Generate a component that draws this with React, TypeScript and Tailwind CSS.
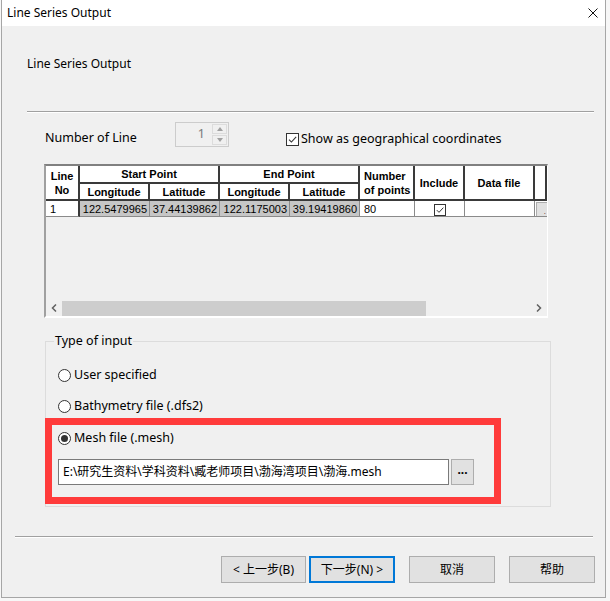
import React from 'react';

const ui = "font-['Noto_Sans','Noto_Sans_CJK_SC',sans-serif]";
const gridFont = "font-['Liberation_Sans',Arial,sans-serif]";

function Tick({ className }: { className?: string }) {
    return (
        <svg viewBox="0 0 12 12" className={className} fill="none">
            <polyline points="2.2,6.2 4.8,8.8 10,3.2" stroke="#333" strokeWidth="1.2" />
        </svg>
    );
}

function Radio({ checked, label }: { checked?: boolean; label: string }) {
    return (
        <div className="flex h-4 items-center">
            <span className="flex h-[13px] w-[13px] items-center justify-center rounded-full border border-[#333] bg-white">
                {checked && <span className="h-[7px] w-[7px] rounded-full bg-[#333]" />}
            </span>
            <span className="ml-[3px] text-[12.5px] leading-4">{label}</span>
        </div>
    );
}

const head = 'flex items-center justify-center border-b-2 border-r-2 border-[#3a3a3a] bg-white font-bold';
const cell = 'flex items-center border-b border-r border-[#8a8a8a]';

export default function App() {
    return (
        <div className={`h-[601px] w-[610px] overflow-hidden bg-[#f7f7f7] text-black ${ui}`}>
            <div className="ml-[1px] flex h-[598px] w-[605px] flex-col border-x border-b border-[#a6a6a6] bg-[#f0f0f0]">
                {/* title bar */}
                <div className="flex h-[26px] shrink-0 items-center justify-between bg-white pl-[5px] pr-[7px]">
                    <span className="text-[12px] leading-4">Line Series Output</span>
                    <svg viewBox="0 0 10 10" className="h-[10px] w-[10px]" fill="none">
                        <path d="M0.5 0.5 L9.5 9.5 M9.5 0.5 L0.5 9.5" stroke="#111" strokeWidth="1" />
                    </svg>
                </div>

                <p className="ml-[25px] mt-[30px] text-[12px] leading-4">Line Series Output</p>

                <div className="ml-[25px] mt-[39px] h-[2px] w-[567px] border-y border-b-white border-t-[#a0a0a0]" />

                {/* number of line */}
                <div className="ml-[43px] mt-[9px] flex h-[25px] items-start">
                    <span className="mt-[8px] w-[130px] text-[12.5px] leading-4">Number of Line</span>
                    <div className="flex h-[25px] w-[54px] border border-[#cccccc] bg-[#f0f0f0]">
                        <span className="flex-1 pr-[7px] pt-[3px] text-right text-[12.5px] leading-4 text-[#7a7a7a]">1</span>
                        <div className="my-[1px] mr-[1px] flex w-[15px] flex-col gap-[1px]">
                            <div className="flex flex-1 items-center justify-center border border-[#dcdcdc] bg-[#f0f0f0]">
                                <svg viewBox="0 0 6 4" className="h-[4px] w-[6px]">
                                    <path d="M0 4 L3 0 L6 4 Z" fill="#a0a0a0" />
                                </svg>
                            </div>
                            <div className="flex flex-1 items-center justify-center border border-[#dcdcdc] bg-[#f0f0f0]">
                                <svg viewBox="0 0 6 4" className="h-[4px] w-[6px]">
                                    <path d="M0 0 L3 4 L6 0 Z" fill="#a0a0a0" />
                                </svg>
                            </div>
                        </div>
                    </div>
                    <div className="ml-[57px] mt-[9px] flex items-center">
                        <span className="flex h-[13px] w-[13px] items-center justify-center border border-[#333] bg-white">
                            <Tick className="h-[11px] w-[11px]" />
                        </span>
                        <span className="ml-[2px] text-[12.5px] leading-4">Show as geographical coordinates</span>
                    </div>
                </div>

                {/* grid */}
                <div className={`ml-[42px] mt-[17px] flex h-[154px] w-[504px] flex-col border-b-2 border-l-2 border-r border-t-2 border-b-white border-l-[#a0a0a0] border-r-white border-t-[#808080] text-[11px] ${gridFont}`}>
                    <div className="grid grid-cols-[34px_70px_70px_70px_70px_55px_50px_70px_1fr] grid-rows-[18px_17px_16px] overflow-hidden leading-[14px]">
                        <div className={`${head} col-start-1 row-span-2 row-start-1 flex-col`}>
                            <span>Line</span>
                            <span>No</span>
                        </div>
                        <div className={`${head} col-span-2 col-start-2 row-start-1`}>Start Point</div>
                        <div className={`${head} col-span-2 col-start-4 row-start-1`}>End Point</div>
                        <div className={`${head} col-start-6 row-span-2 row-start-1 flex-col !items-start pl-[4px]`}>
                            <span>Number</span>
                            <span>of points</span>
                        </div>
                        <div className={`${head} col-start-7 row-span-2 row-start-1`}>Include</div>
                        <div className={`${head} col-start-8 row-span-2 row-start-1`}>Data file</div>
                        <div className={`${head} col-start-9 row-span-2 row-start-1 border-r-0`} />
                        <div className={`${head} col-start-2 row-start-2`}>Longitude</div>
                        <div className={`${head} col-start-3 row-start-2`}>Latitude</div>
                        <div className={`${head} col-start-4 row-start-2`}>Longitude</div>
                        <div className={`${head} col-start-5 row-start-2`}>Latitude</div>

                        <div className="col-start-1 row-start-3 flex items-center border-b border-r-2 border-b-[#8a8a8a] border-r-[#3a3a3a] bg-white pl-[4px]">
                            1
                        </div>
                        <div className={`${cell} col-start-2 row-start-3 justify-end bg-[#c6c6c6] pr-[2px]`}>122.5479965</div>
                        <div className={`${cell} col-start-3 row-start-3 justify-end bg-[#c6c6c6] pr-[2px]`}>37.44139862</div>
                        <div className={`${cell} col-start-4 row-start-3 justify-end bg-[#c6c6c6] pr-[2px]`}>122.1175003</div>
                        <div className={`${cell} col-start-5 row-start-3 justify-end bg-[#c6c6c6] pr-[2px]`}>39.19419860</div>
                        <div className={`${cell} col-start-6 row-start-3 bg-white pl-[4px]`}>80</div>
                        <div className={`${cell} col-start-7 row-start-3 items-end justify-center bg-white`}>
                            <span className="flex h-[12px] w-[12px] items-center justify-center border border-[#333] bg-white">
                                <Tick className="h-[10px] w-[10px]" />
                            </span>
                        </div>
                        <div className={`${cell} col-start-8 row-start-3 bg-white`} />
                        <div className="col-start-9 row-start-3 flex items-stretch border-b border-[#8a8a8a] bg-white pl-[1px] pt-[1px]">
                            <span className="flex flex-1 items-end justify-end overflow-hidden border-l border-t border-[#adadad] bg-[#e1e1e1] pr-[1px] text-[8px] leading-[8px] text-[#5a1010]">
                                .
                            </span>
                        </div>
                    </div>

                    <div className="flex-1" />

                    {/* horizontal scrollbar */}
                    <div className="flex h-[16px] items-center bg-[#f0f0f0]">
                        <div className="flex w-[16px] items-center justify-center">
                            <svg viewBox="0 0 6 8" className="h-[8px] w-[6px]" fill="none">
                                <path d="M5 0.5 L1.5 4 L5 7.5" stroke="#606060" strokeWidth="1.5" />
                            </svg>
                        </div>
                        <div className="h-[15px] w-[364px] bg-[#cdcdcd]" />
                        <div className="flex-1" />
                        <div className="flex w-[16px] items-center justify-center">
                            <svg viewBox="0 0 6 8" className="h-[8px] w-[6px]" fill="none">
                                <path d="M1 0.5 L4.5 4 L1 7.5" stroke="#606060" strokeWidth="1.5" />
                            </svg>
                        </div>
                    </div>
                </div>

                {/* type of input */}
                <div className="ml-[43px] mt-[23px] h-[166px] w-[506px] border border-[#dcdcdc]">
                    <span className="-mt-[9px] ml-[8px] block w-fit bg-[#f0f0f0] px-[1px] text-[12.5px] leading-4">
                        Type of input
                    </span>
                    <div className="ml-[12px] mt-[18px]">
                        <Radio label="User specified" />
                    </div>
                    <div className="ml-[12px] mt-[15px]">
                        <Radio label="Bathymetry file (.dfs2)" />
                    </div>
                    <div className="-ml-[1px] mt-[4px] h-[86px] w-[456px] border-[7px] border-[#ff3b3b]">
                        <div className="ml-[6px] mt-[5px]">
                            <Radio checked label="Mesh file (.mesh)" />
                        </div>
                        <div className="ml-[6px] mt-[13px] flex gap-[2px]">
                            <div className="flex h-[26px] w-[391px] items-center border border-[#7a7a7a] bg-white pl-[4px] text-[12px] leading-4">
                                E:\研究生资料\学科资料\臧老师项目\渤海湾项目\渤海.mesh
                            </div>
                            <button
                                type="button"
                                className="flex h-[26px] w-[23px] items-center justify-center border border-[#adadad] bg-[#e1e1e1] pb-[4px] text-[12px] font-bold leading-4"
                            >
                                ...
                            </button>
                        </div>
                    </div>
                </div>

                <div className="ml-[13px] mt-[29px] h-[2px] w-[578px] border-y border-b-white border-t-[#a0a0a0]" />

                {/* buttons */}
                <div className="mr-[10px] mt-[18px] flex justify-end text-[12px] leading-4">
                    <button type="button" className="h-[27px] w-[85px] border border-[#adadad] bg-[#e1e1e1]">
                        &lt; 上一步(B)
                    </button>
                    <button type="button" className="ml-[3px] h-[27px] w-[86px] border-2 border-[#0078d7] bg-[#e1e1e1]">
                        下一步(N) &gt;
                    </button>
                    <button type="button" className="ml-[14px] h-[27px] w-[86px] border border-[#adadad] bg-[#e1e1e1]">
                        取消
                    </button>
                    <button type="button" className="ml-[14px] h-[27px] w-[86px] border border-[#adadad] bg-[#e1e1e1]">
                        帮助
                    </button>
                </div>
            </div>
        </div>
    );
}
